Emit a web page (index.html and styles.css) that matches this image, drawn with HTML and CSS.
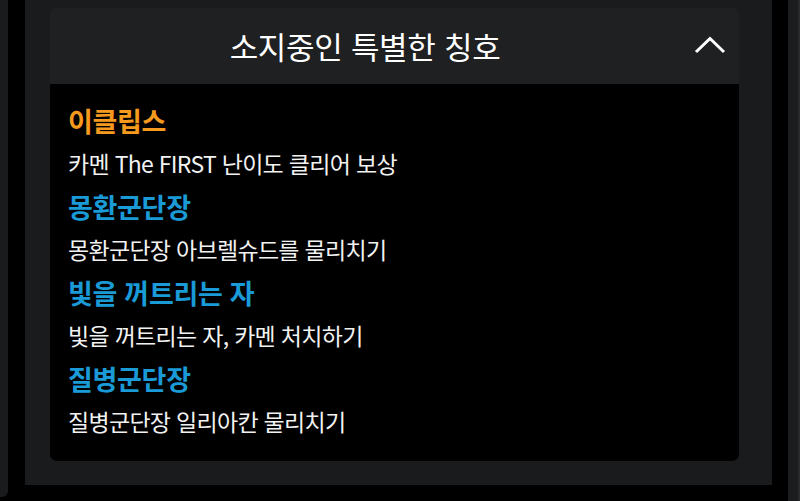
FILE: index.html
```html
<!DOCTYPE html>
<html lang="ko">
<head>
<meta charset="utf-8">
<link rel="stylesheet" href="styles.css">
</head>
<body>
<div class="page">
  <div class="edge-left"></div>
  <div class="gap-left"></div>
  <div class="panel">
    <section class="card">
      <header class="card-head">
        <h2 class="card-title">소지중인 특별한 칭호</h2>
        <span class="chevron">
          <svg width="32" height="18" viewBox="0 0 32 18"><path d="M2 16 L16 2.5 L30 16" fill="none" stroke="#fff" stroke-width="3"/></svg>
        </span>
      </header>
      <div class="card-body">
        <p class="title orange">이클립스</p>
        <p class="desc">카멘 The FIRST 난이도 클리어 보상</p>
        <p class="title blue">몽환군단장</p>
        <p class="desc">몽환군단장 아브렐슈드를 물리치기</p>
        <p class="title blue">빛을 꺼트리는 자</p>
        <p class="desc">빛을 꺼트리는 자, 카멘 처치하기</p>
        <p class="title blue">질병군단장</p>
        <p class="desc">질병군단장 일리아칸 물리치기</p>
      </div>
    </section>
  </div>
  <div class="gap-right"></div>
  <div class="edge-right"></div>
</div>
</body>
</html>
```
FILE: styles.css
```css
html, body {
  margin: 0;
  padding: 0;
  background: #000;
}
body {
  font-family: "Noto Sans CJK KR", "Noto Sans", sans-serif;
  color: #fff;
}
.page {
  display: flex;
  align-items: flex-start;
  width: 800px;
  height: 501px;
  overflow: hidden;
}
.edge-left {
  width: 8px;
  height: 497px;
  background: #1a1b1d;
  border-radius: 0 0 6px 0;
  flex: none;
}
.gap-left {
  width: 17px;
  flex: none;
}
.panel {
  width: 747px;
  height: 485px;
  box-sizing: border-box;
  padding: 8px 33px 0 25px;
  background: #1a1b1d;
  flex: none;
}
.gap-right {
  width: 16px;
  flex: none;
}
.edge-right {
  width: 12px;
  height: 501px;
  background: #1c1d1f;
  border-right: 2px solid #2a2b2e;
  box-sizing: border-box;
  flex: none;
}
.card {
  width: 689px;
  height: 453px;
  display: flex;
  flex-direction: column;
}
.card-head {
  height: 76px;
  background: #1f2022;
  border-radius: 7px 7px 0 0;
  display: flex;
  align-items: center;
  flex: none;
}
.card-title {
  flex: 1;
  margin: 0;
  text-align: center;
  font-size: 31px;
  font-weight: 400;
  letter-spacing: -0.3px;
  padding-bottom: 2px;
}
.chevron {
  width: 59px;
  display: flex;
  justify-content: flex-start;
  padding-left: 14px;
  box-sizing: border-box;
  padding-bottom: 3px;
}
.card-body {
  flex: 1;
  background: #000;
  border-radius: 0 0 7px 7px;
  padding: 15px 18px 0 18px;
}
.card-body p {
  margin: 0;
  height: 43px;
  line-height: 43px;
  white-space: nowrap;
}
.title {
  font-size: 27px;
  font-weight: 700;
  letter-spacing: -0.3px;
}
.orange { color: #f5991f; }
.blue { color: #1a9ad6; }
.desc {
  font-size: 23px;
  font-weight: 400;
  letter-spacing: -0.7px;
  color: #f2f2f2;
}
```
